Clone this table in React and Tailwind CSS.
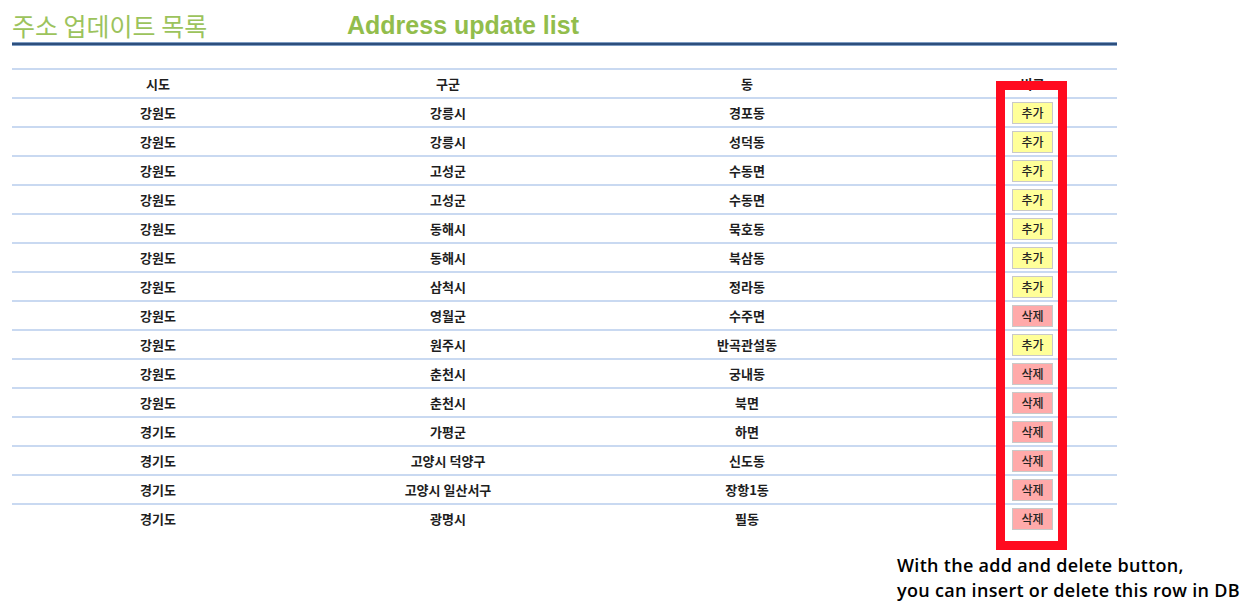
import React from "react";

const rows = [
  ["강원도", "강릉시", "경포동", "add"],
  ["강원도", "강릉시", "성덕동", "add"],
  ["강원도", "고성군", "수동면", "add"],
  ["강원도", "고성군", "수동면", "add"],
  ["강원도", "동해시", "묵호동", "add"],
  ["강원도", "동해시", "북삼동", "add"],
  ["강원도", "삼척시", "정라동", "add"],
  ["강원도", "영월군", "수주면", "del"],
  ["강원도", "원주시", "반곡관설동", "add"],
  ["강원도", "춘천시", "궁내동", "del"],
  ["강원도", "춘천시", "북면", "del"],
  ["경기도", "가평군", "하면", "del"],
  ["경기도", "고양시 덕양구", "신도동", "del"],
  ["경기도", "고양시 일산서구", "장항1동", "del"],
  ["경기도", "광명시", "필동", "del"],
];

const kr = { fontFamily: '"Noto Sans CJK KR", "Noto Sans", sans-serif' };

function ActionButton({ kind }) {
  const isAdd = kind === "add";
  return (
    <button
      className={
        "w-[41px] h-[22px] border border-[#c9c9c9] text-[12px] font-medium text-[#222] leading-none " +
        (isAdd ? "bg-[#ffff99]" : "bg-[#ffaaaa]")
      }
      style={kr}
    >
      {isAdd ? "추가" : "삭제"}
    </button>
  );
}

export default function App() {
  return (
    <div className="relative w-[1250px] h-[616px] bg-white overflow-hidden" style={kr}>
      <div className="ml-[12px] w-[1105px]">
        <div className="h-[42px] flex items-center pt-[8px]">
          <h1 className="w-[335px] text-[25px] text-[#9cc35c] font-normal leading-none">
            주소 업데이트 목록
          </h1>
          <h2
            className="text-[25px] font-bold text-[#92bd4c] leading-none"
            style={{ fontFamily: '"Liberation Sans Narrow", "Liberation Sans", sans-serif' }}
          >
            Address update list
          </h2>
        </div>
        <div className="h-[4px] bg-[#2d4f7d] border-y border-[#7e9cc2]" />

        <div className="mt-[22px] text-[13px] font-semibold text-[#1e1e1e]">
          <div className="grid grid-cols-[292px_288px_310px_215px] h-[29px] items-center text-center border-t-2 border-[#c9d9f1]">
            <div>시도</div>
            <div>구군</div>
            <div>동</div>
            <div className="pl-[46px]">비고</div>
          </div>
          {rows.map((r, i) => (
            <div
              key={i}
              className="grid grid-cols-[292px_288px_310px_215px] h-[29px] items-center text-center border-t-2 border-[#c9d9f1]"
            >
              <div>{r[0]}</div>
              <div>{r[1]}</div>
              <div>{r[2]}</div>
              <div className="pl-[46px] flex justify-center">
                <ActionButton kind={r[3]} />
              </div>
            </div>
          ))}
        </div>
      </div>

      <div className="absolute left-[996px] top-[81px] w-[71px] h-[469px] border-[9px] border-[#ff0b1f]" />

      <p
        className="absolute left-[897px] top-[553px] text-[18px] leading-[25px] font-semibold tracking-[0.3px] text-black whitespace-nowrap"
        style={{ fontFamily: '"Open Sans", "Noto Sans", sans-serif' }}
      >
        With the add and delete button,
        <br />
        you can insert or delete this row in DB
      </p>
    </div>
  );
}
